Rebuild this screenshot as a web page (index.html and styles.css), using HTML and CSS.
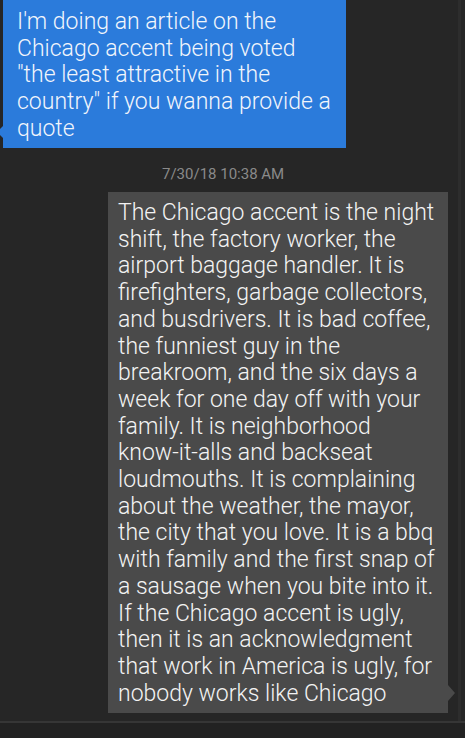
FILE: index.html
```html
<!DOCTYPE html>
<html>
<head>
<meta charset="utf-8">
<link rel="stylesheet" href="styles.css">
</head>
<body>
<div class="screen">
  <div class="thread">
    <div class="msg msg-out">
      <p class="bubble-text">I'm doing an article on the<br>Chicago accent being voted<br>"the least attractive in the<br>country" if you wanna provide a<br>quote</p>
    </div>
    <div class="stamp">7/30/18 10:38 AM</div>
    <div class="msg msg-in">
      <p class="bubble-text">The Chicago accent is the night<br>shift, the factory worker, the<br>airport baggage handler. It is<br>firefighters, garbage collectors,<br>and busdrivers. It is bad coffee,<br>the funniest guy in the<br>breakroom, and the six days a<br>week for one day off with your<br>family. It is neighborhood<br>know-it-alls and backseat<br>loudmouths. It is complaining<br>about the weather, the mayor,<br>the city that you love. It is a bbq<br>with family and the first snap of<br>a sausage when you bite into it.<br>If the Chicago accent is ugly,<br>then it is an acknowledgment<br>that work in America is ugly, for<br>nobody works like Chicago</p>
    </div>
  </div>
  <div class="footer"></div>
</div>
</body>
</html>
```

FILE: styles.css
```css
html, body {
  margin: 0;
  padding: 0;
  background: #262626;
}
.screen {
  width: 465px;
  height: 738px;
  display: flex;
  flex-direction: column;
  overflow: hidden;
  font-family: "Roboto Light", Roboto, "Noto Sans", sans-serif;
  font-weight: 300;
}
.thread {
  flex: 1;
  display: flex;
  flex-direction: column;
  border-right: 3px solid #2d2d2d;
  margin-right: 4px;
}
.msg {
  position: relative;
  box-sizing: border-box;
}
.bubble-text {
  margin: 0;
  white-space: nowrap;
}
.msg-out {
  margin-left: 3px;
  width: 343px;
  height: 148px;
  background: #2b7bdb;
  color: #f1f5fb;
  padding: 9px 0 0 14px;
  font-size: 23px;
  line-height: 26.7px;
}
.msg-out::before {
  content: "";
  position: absolute;
  left: -6px;
  bottom: 10px;
  border-style: solid;
  border-width: 6px 6px 6px 0;
  border-color: transparent #2b7bdb transparent transparent;
}
.stamp {
  margin: 18px 0 0 162px;
  height: 26px;
  color: #8a8a8a;
  font-family: Roboto, "Noto Sans", sans-serif;
  font-size: 15px;
  font-weight: 400;
  line-height: 16px;
}
.msg-in {
  margin-left: 108px;
  width: 340px;
  height: 521px;
  background: #4a4a4a;
  color: #f3f3f3;
  padding: 8px 0 0 10px;
  font-size: 23px;
  line-height: 26.7px;
}
.msg-in::after {
  content: "";
  position: absolute;
  right: -7px;
  bottom: 12px;
  border-style: solid;
  border-width: 8px 0 8px 7px;
  border-color: transparent transparent transparent #4a4a4a;
}
.footer {
  height: 15px;
  border-top: 2px solid #363636;
  background: #222222;
}
```
